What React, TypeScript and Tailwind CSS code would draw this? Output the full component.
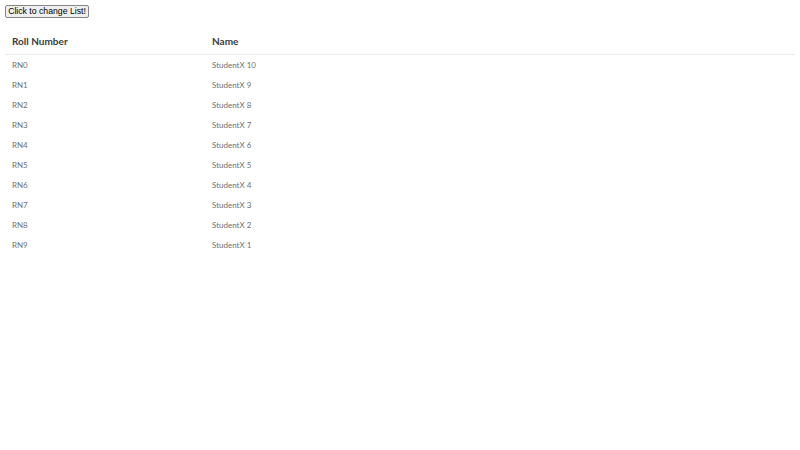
import { useState } from 'react'

const makeList = (reversed: boolean) =>
  Array.from({ length: 10 }, (_, i) => ({
    roll: `RN${i}`,
    name: `StudentX ${reversed ? 10 - i : i + 1}`,
  }))

export default function App() {
  const [reversed, setReversed] = useState(true)
  const students = makeList(reversed)

  return (
    <div className="min-h-screen bg-white p-[5px]" style={{ fontFamily: 'Lato, "Open Sans", sans-serif' }}>
      <button
        onClick={() => setReversed(!reversed)}
        className="flex h-[13px] w-[84px] items-center justify-center whitespace-nowrap rounded-[2px] border border-[#858585] bg-[#efefef] text-[8.7px] leading-none text-black"
        style={{ fontFamily: '"Liberation Sans", Arial, sans-serif' }}
      >
        Click to change List!
      </button>

      <div className="mt-[9px] w-[790px]">
        <div className="flex h-[28px] items-center border-b border-[#ececec] pt-[2px] text-[10px] font-bold text-[#3a3a3a]">
          <div className="w-[207px] pl-[7px]">Roll Number</div>
          <div className="flex-1">Name</div>
        </div>
        {students.map((s) => (
          <div key={s.roll} className="flex h-[20px] items-center text-[8px] text-[#707070]">
            <div className="w-[207px] pl-[7px]">{s.roll}</div>
            <div className="flex-1">{s.name}</div>
          </div>
        ))}
      </div>
    </div>
  )
}
